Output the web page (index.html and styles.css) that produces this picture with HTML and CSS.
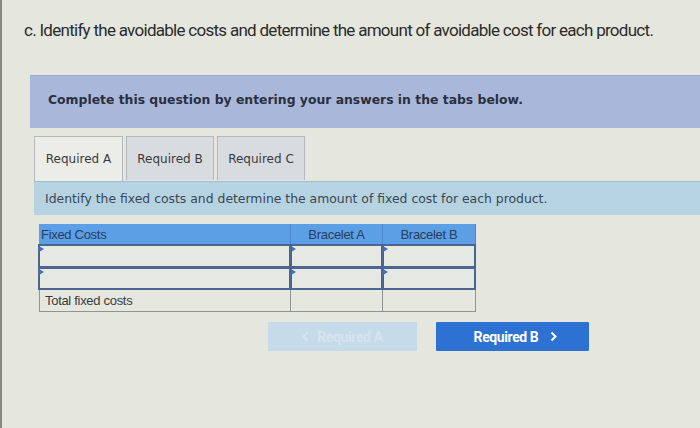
FILE: index.html
```html
<!DOCTYPE html>
<html>
<head>
<meta charset="utf-8">
<link rel="stylesheet" href="styles.css">
</head>
<body>
<div class="page">
  <p class="question">c. Identify the avoidable costs and determine the amount of avoidable cost for each product.</p>
  <div class="banner">Complete this question by entering your answers in the tabs below.</div>
  <div class="tabs">
    <div class="tab active">Required A</div>
    <div class="tab">Required B</div>
    <div class="tab">Required C</div>
  </div>
  <div class="instruction">Identify the fixed costs and determine the amount of fixed cost for each product.</div>
  <div class="grid">
    <div class="hd hd-left">Fixed Costs</div>
    <div class="hd">Bracelet A</div>
    <div class="hd">Bracelet B</div>
    <div class="in"><span class="flag"></span></div>
    <div class="in"><span class="flag"></span></div>
    <div class="in"><span class="flag"></span></div>
    <div class="in"><span class="flag"></span></div>
    <div class="in"><span class="flag"></span></div>
    <div class="in"><span class="flag"></span></div>
    <div class="tot label">Total fixed costs</div>
    <div class="tot"></div>
    <div class="tot"></div>
  </div>
  <div class="nav">
    <div class="btn prev"><svg class="chev" width="7" height="11" viewBox="0 0 7 11"><path d="M5.5 1.5 L1.5 5.5 L5.5 9.5" fill="none" stroke="currentColor" stroke-width="2"/></svg>Required A</div>
    <div class="btn next">Required B<svg class="chev" width="7" height="11" viewBox="0 0 7 11"><path d="M1.5 1.5 L5.5 5.5 L1.5 9.5" fill="none" stroke="currentColor" stroke-width="2"/></svg></div>
  </div>
</div>
</body>
</html>
```
FILE: styles.css
```css
html, body {
  margin: 0;
  padding: 0;
}
body {
  width: 700px;
  height: 428px;
  overflow: hidden;
  background: #e5e7de;
  border-left: 2px solid #8a8a84;
  box-sizing: border-box;
}
.page {
  display: flex;
  flex-direction: column;
}
.question {
  margin: 19px 0 0 22px;
  font-family: Roboto, "Liberation Sans", sans-serif;
  font-size: 17px;
  letter-spacing: -0.72px;
  color: #2b2b2b;
  line-height: 22px;
}
.banner {
  margin: 34px 0 0 28px;
  height: 53px;
  box-sizing: border-box;
  background: #a9b8da;
  font-family: "DejaVu Sans", Verdana, sans-serif;
  font-weight: bold;
  font-size: 12.4px;
  color: #2a2f3f;
  display: flex;
  align-items: center;
  padding: 0 0 6px 18px;
  border-top: 1px solid #98a8cc;
}
.tabs {
  display: flex;
  gap: 3px;
  margin: 8px 0 0 32px;
}
.tab {
  width: 88px;
  height: 44px;
  box-sizing: border-box;
  border: 1px solid #b4b8bd;
  border-bottom: none;
  background: #d8dce0;
  font-family: "DejaVu Sans", Verdana, sans-serif;
  font-size: 12px;
  color: #3a3a3a;
  display: flex;
  align-items: center;
  justify-content: center;
}
.tab.active {
  width: 89px;
  background: #ecece8;
  height: 45px;
}
.instruction {
  margin: 0 0 0 32px;
  height: 34px;
  background: #b6d3e2;
  border-top: 1px solid #9dbfd1;
  box-sizing: border-box;
  font-family: "DejaVu Sans", Verdana, sans-serif;
  font-size: 12.4px;
  color: #3a4652;
  display: flex;
  align-items: center;
  padding-left: 11px;
}
.grid {
  margin: 9px 0 0 37px;
  display: grid;
  grid-template-columns: 252px 92px 93px;
  grid-template-rows: 21px 23px 22px 22px;
  width: 437px;
  font-family: "Liberation Sans", Arial, sans-serif;
  font-size: 13px;
  letter-spacing: -0.3px;
}
.hd {
  background: #5c9fe4;
  color: #2a3d5c;
  display: flex;
  align-items: center;
  justify-content: center;
  border-right: 1px solid #4a86cc;
  box-sizing: border-box;
}
.hd-left {
  justify-content: flex-start;
  padding-left: 2px;
}
.in {
  position: relative;
  border: 2px solid #4b6590;
  margin: -1px 0 0 -1px;
  background: #e6e9e1;
}
.flag {
  position: absolute;
  left: -1px;
  top: 0;
  width: 0;
  height: 0;
  border-top: 3px solid transparent;
  border-bottom: 3px solid transparent;
  border-left: 5px solid #3f6fc0;
}
.tot {
  border: 1px solid #8f9490;
  border-top: none;
  background: #e6e8e0;
  box-sizing: border-box;
}
.tot + .tot {
  border-left: none;
}
.label {
  display: flex;
  align-items: center;
  padding-left: 5px;
  color: #3a3a3a;
}
.nav {
  display: flex;
  gap: 19px;
  margin: 10px 0 0 266px;
}
.btn {
  height: 29px;
  display: flex;
  align-items: center;
  justify-content: center;
  gap: 12px;
  font-family: Roboto, "Liberation Sans", sans-serif;
  font-weight: bold;
  font-size: 14px;
  letter-spacing: -0.4px;
}
.prev {
  width: 149px;
  background: #c5dbe9;
  color: #d6e4ee;
  gap: 8px;
}
.next {
  width: 153px;
  background: #2d72d2;
  color: #ffffff;
  border-radius: 1px;
  padding-left: 6px;
  box-sizing: border-box;
}
```
